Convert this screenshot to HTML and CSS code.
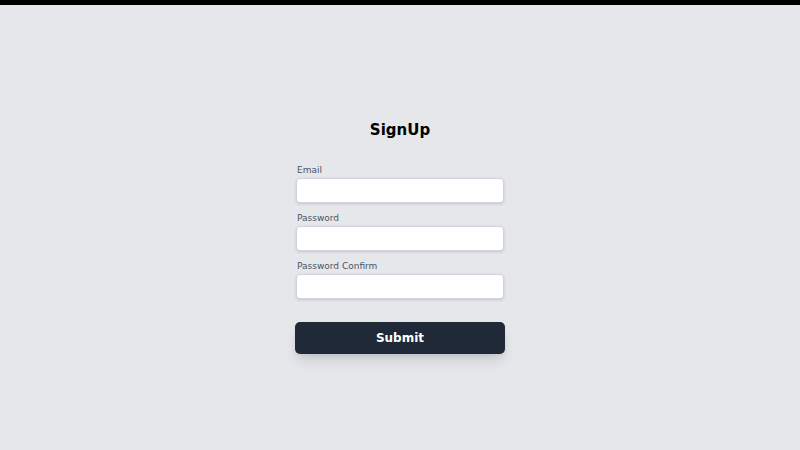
FILE: index.html
```html
<!DOCTYPE html>
<html lang="en">
<head>
<meta charset="utf-8">
<title>SignUp</title>
<link rel="stylesheet" href="styles.css">
</head>
<body>
<div class="topbar"></div>
<main class="page">
  <form class="signup">
    <h1 class="title">SignUp</h1>
    <div class="field">
      <label class="label" for="email">Email</label>
      <input class="input" id="email" type="email">
    </div>
    <div class="field">
      <label class="label" for="password">Password</label>
      <input class="input" id="password" type="password">
    </div>
    <div class="field">
      <label class="label" for="confirm">Password Confirm</label>
      <input class="input" id="confirm" type="password">
    </div>
    <button class="submit" type="button">Submit</button>
  </form>
</main>
</body>
</html>
```
FILE: styles.css
```css
html, body {
  margin: 0;
  padding: 0;
}
body {
  background: #e5e7eb;
  font-family: "DejaVu Sans", Verdana, sans-serif;
  height: 450px;
  overflow: hidden;
}
.topbar {
  height: 5px;
  background: #000;
}
.page {
  display: flex;
  justify-content: center;
  padding-top: 113.75px;
}
.signup {
  width: 210px;
  display: flex;
  flex-direction: column;
}
.title {
  margin: 0 0 23px;
  font-size: 15px;
  line-height: 22.5px;
  font-weight: bold;
  text-align: center;
  color: #000;
}
.field {
  display: flex;
  flex-direction: column;
  margin-bottom: 8.75px;
}
.label {
  font-size: 9px;
  line-height: 12px;
  color: #4b5563;
  padding-left: 2px;
  margin-bottom: 2px;
}
.input {
  box-sizing: border-box;
  height: 25px;
  margin: 0 1px;
  border: 1px solid #d1d5db;
  border-radius: 4px;
  background: #fff;
  box-shadow: 0 1px 3px rgba(0, 0, 0, 0.15);
  font: inherit;
  font-size: 11px;
  padding: 0 8px;
  outline: none;
}
.submit {
  margin-top: 14.25px;
  height: 32px;
  border: none;
  border-radius: 5px;
  background: #1f2937;
  color: #fff;
  font-family: "DejaVu Sans", Verdana, sans-serif;
  font-weight: bold;
  font-size: 12px;
  box-shadow: 0 8px 14px -3px rgba(0, 0, 0, 0.14), 0 3px 6px -2px rgba(0, 0, 0, 0.07);
  cursor: pointer;
}
```
